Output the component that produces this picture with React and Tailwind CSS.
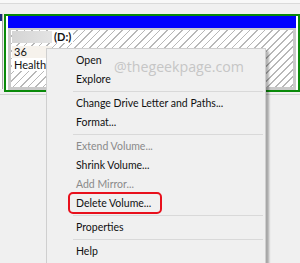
import React from 'react';

const font = { fontFamily: 'Lato, "Noto Sans", Arial, sans-serif' };

const menuItems = [
  { label: 'Open' },
  { label: 'Explore' },
  { sep: true },
  { label: 'Change Drive Letter and Paths...' },
  { label: 'Format...' },
  { sep: true },
  { label: 'Extend Volume...', disabled: true },
  { label: 'Shrink Volume...' },
  { label: 'Add Mirror...', disabled: true },
  { label: 'Delete Volume...', marked: true },
  { sep: true },
  { label: 'Properties' },
  { sep: true },
  { label: 'Help' },
];

function ContextMenu() {
  return (
    <div className="absolute left-[46px] top-[48px] w-[220px] h-[230px] bg-[#f0f0f0] border border-[#cfcfcf] pt-[2px] shadow-[3px_3px_2px_rgba(0,0,0,0.3)]">
      {menuItems.map((item, idx) =>
        item.sep ? (
          <div key={idx} className="h-[5px] flex items-center ml-[26px] mr-[2px]">
            <div className="w-full h-px bg-[#d9d9d9]" />
          </div>
        ) : (
          <div
            key={idx}
            className={`relative h-[19px] flex items-center pl-[29px] text-[10.5px] whitespace-nowrap ${
              item.disabled ? 'text-[#8a8a8a]' : 'text-[#111]'
            }`}
          >
            {item.label}
            {item.marked && (
              <span className="absolute left-[21px] top-[-2px] w-[94px] h-[22px] border-2 border-[#e8101c] rounded-[5px]" />
            )}
          </div>
        )
      )}
    </div>
  );
}

export default function App() {
  return (
    <div className="relative w-[300px] h-[263px] overflow-hidden bg-[#f0f0f0] text-[#111]" style={font}>
      {/* top strip */}
      <div className="h-[14px]">
        <div className="h-[4px] bg-[#f8f8f8] border-b border-[#dadada]" />
      </div>

      {/* disk row */}
      <div className="flex h-[78px]">
        <div className="w-[5px] h-[75px] bg-white border-r border-[#a8a8a8] flex flex-col">
          <div className="h-[7px] bg-[#1b2d78]" />
        </div>
        <div className="ml-px w-[296px] shrink-0 border-2 border-[#0a8a0a] px-[2px] bg-white flex flex-col">
          <div className="h-[12px] bg-[#0000ff]" />
          <div className="flex-1 bg-[#c9c9c9] px-[3px] pt-[2px] pb-[3px]">
            <div className="h-full bg-[image:repeating-linear-gradient(135deg,#ffffff_0_4px,#b8b8b8_4px_5.3px)] pl-px text-[11px] leading-[13px]">
              <div className="flex items-center h-[13px]">
                <div className="w-[40px] h-[12px] bg-gradient-to-r from-[#d4d4d4] to-[#e4e4e4]" />
                <span className="bg-white font-bold pl-[2px] pr-[2px]">(D:)</span>
              </div>
              <div className="mt-[3px] w-[40px] h-[12px] bg-[#f6f2ec] pl-[2px] leading-[12px]">36</div>
              <div className="w-[40px] h-[13px] bg-white pl-[2px] whitespace-nowrap">Healthy</div>
            </div>
          </div>
        </div>
      </div>

      <div className="mt-[2px] border-t border-[#d2d2d2]" />

      <ContextMenu />

      {/* watermark */}
      <div className="absolute left-[114px] top-[56px] text-[14.2px] text-[#c6c6c6] whitespace-nowrap" style={{ fontFamily: '"Open Sans", sans-serif' }}>
        @thegeekpage.com
      </div>
    </div>
  );
}
